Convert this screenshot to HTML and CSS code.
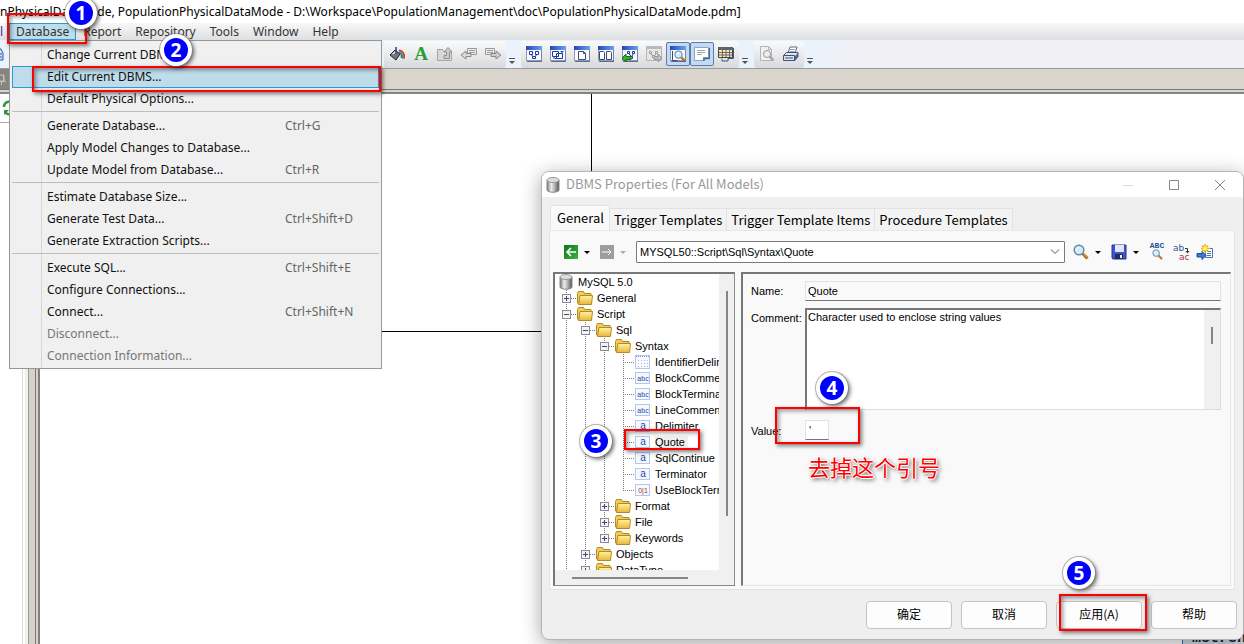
FILE: index.html
```
<!DOCTYPE html>
<html lang="zh-CN">
<head>
    <meta charset="UTF-8">
    <meta name="viewport" content="width=device-width, initial-scale=1.0">
    <title>DBMS Properties</title>
    <link rel="stylesheet" href="styles.css">
</head>
<body>
    <!-- shared icons -->
    <svg class="defs" width="0" height="0">
        <defs>
            <linearGradient id="metal"><stop offset="0" stop-color="#777"/><stop offset=".35" stop-color="#eee"/><stop offset=".6" stop-color="#bbb"/><stop offset="1" stop-color="#555"/></linearGradient>
            <linearGradient id="gold" x2="0" y2="1"><stop offset="0" stop-color="#fff3a8"/><stop offset="1" stop-color="#e8b637"/></linearGradient>
            <linearGradient id="blue" x2="1" y2="0"><stop offset="0" stop-color="#2348b8"/><stop offset="1" stop-color="#6fa0f0"/></linearGradient>
            <linearGradient id="green" x2="1" y2="1"><stop offset="0" stop-color="#0d7a12"/><stop offset="1" stop-color="#3cb043"/></linearGradient>
        </defs>
        <symbol id="cylinder" viewBox="0 0 14 16">
            <path d="M1 3v10c0 3 12 3 12 0V3z" fill="url(#metal)" stroke="#888"/>
            <ellipse cx="7" cy="3" rx="6" ry="2.5" fill="#ddd" stroke="#999"/>
        </symbol>
        <symbol id="folder" viewBox="0 0 16 14">
            <path d="M.5 12V2.500l1-2h5l1 2h6.500V12z" fill="#f2cb58" stroke="#b48a22"/>
            <path d="M1.500 13.500L3 4.500h12.500l-1 9z" fill="url(#gold)" stroke="#b48a22"/>
        </symbol>
        <symbol id="win" viewBox="0 0 16 16">
            <rect x=".5" y="1.500" width="15" height="13" fill="#f7f9fd" stroke="#8d9bb8"/>
            <rect y="0" width="16" height="4" fill="url(#blue)"/>
            <path d="M1 15.500h15V4" fill="none" stroke="#5d6c8c"/>
        </symbol>
        <symbol id="lens" viewBox="0 0 16 16">
            <path d="M9.500 9.500l5 5" stroke="#a8641a" stroke-width="3"/>
            <path d="M9.500 9l4.500 4.500" stroke="#f0b45c"/>
            <circle cx="6" cy="6" r="4.800" fill="#d4ebfa" stroke="#6485a5" stroke-width="1.400"/>
            <path d="M3.500 6A2.500 2.500 0 0 1 6 3.500" stroke="#fff" fill="none"/>
        </symbol>
        <symbol id="blob" viewBox="0 0 16 16">
            <path d="M.5 2.500h14v11H.5z" fill="#f4f8ff" stroke="#6f93d6" stroke-dasharray="1 1"/>
        </symbol>
        <symbol id="overflow" viewBox="0 0 8 8"><path d="M1 1.500h6" stroke="#555"/><path d="M1 4h6L4 7z" fill="#555"/></symbol>
    </svg>

    <div class="app">
        <header class="title-bar">nPhysicalDataMode, PopulationPhysicalDataMode - D:\Workspace\PopulationManagement\doc\PopulationPhysicalDataMode.pdm]</header>

        <nav class="menu-bar">
            <button class="clipped">l</button>
            <button class="open">Database</button>
            <button>Report</button>
            <button>Repository</button>
            <button>Tools</button>
            <button>Window</button>
            <button>Help</button>
        </nav>

        <div class="toolbar">
            <svg class="edge-icon" viewBox="0 0 4 14"><path d="M0 2h1l2 4v7H0" fill="#cfe0fa" stroke="#2f56a8"/><path d="M0 7h2M0 10h2" stroke="#2f56a8"/></svg>
            <div class="tool-group first">
                <button aria-label="Fill"><svg viewBox="0 0 16 16"><path d="M1 9l5-5 5 4-4 6z" fill="#777" stroke="#222"/><path d="M2.500 8.500L6 5l2 2z" fill="#eee"/><path d="M7 8V1" stroke="#223a9a" stroke-width="1.500"/><path d="M9 7c3-1 4 2 3.500 5" fill="none" stroke="#2456e0" stroke-width="1.500"/><path d="M9.500 6c4 0 4.500 3 4.500 7" fill="none" stroke="#20b040" stroke-width="1.500"/><path d="M10 4.500c5 0 5.500 4 5.500 8" fill="none" stroke="#f02020" stroke-width="1.500"/></svg></button>
                <button aria-label="Font"><svg viewBox="0 0 16 16"><text class="font-icon" x="8" y="14" text-anchor="middle">A</text></svg></button>
                <button aria-label="Up" disabled><svg viewBox="0 0 16 16"><path d="M.5 3.500h5l1 2h8v9H.5z" fill="#d8d8d8" stroke="#a5a5a5"/><path d="M7 12.500h5.500V6H15l-4-4.500L7 6h2.500v3.500H7z" fill="#ccc" stroke="#8f8f8f"/></svg></button>
                <button aria-label="Previous" disabled><svg viewBox="0 0 16 16"><path d="M6.500 2.500h9v6h-9zM8 4.500h6M8 6.500h6" fill="#eee" stroke="#999"/><path d="M0 9l5-4v2.500h5v3H5V13z" fill="#ddd" stroke="#888"/></svg></button>
                <button aria-label="Next" disabled><svg viewBox="0 0 16 16"><path d="M.5 2.500h9v6h-9zM2 4.500h6M2 6.500h6" fill="#eee" stroke="#999"/><path d="M16 9l-5-4v2.500H6v3h5V13z" fill="#ccc" stroke="#888"/></svg></button>
            </div>
            <svg class="overflow"><use href="#overflow"/></svg>
            <div class="tool-group">
                <button aria-label="Diagram"><svg viewBox="0 0 16 16"><use href="#win"/><path d="M3.500 5.500h3v3h-3zM9.500 5.500h3v3h-3zM6.500 10.500h3v2h-3zM5 8.500l2 2M11 8.500l-2 2" fill="#fff" stroke="#1c38a8"/></svg></button>
                <button aria-label="Package"><svg viewBox="0 0 16 16"><use href="#win"/><path d="M2.500 5.500h6v5h-6zM6.500 7.500h6v5h-6zM5 12.500h3M10.500 5.500h3M3 12h2M12 5v3" fill="none" stroke="#1c38a8"/></svg></button>
                <button aria-label="Page"><svg viewBox="0 0 16 16"><use href="#win"/><path d="M4.500 5.500h5l2 2v6h-7zM9.500 5.500v2h2" fill="#fff" stroke="#3a4a70"/></svg></button>
                <button aria-label="Pages"><svg viewBox="0 0 16 16"><use href="#win"/><path d="M1.500 5.500h4l1 1v7h-5zM8.500 5.500h4l1 1v7h-5z" fill="#fff" stroke="#3a4a70"/></svg></button>
                <button aria-label="Previous diagram"><svg viewBox="0 0 16 16"><use href="#win"/><path d="M5.500 5.500h2v2h-2zM10.500 5.500h2v2h-2zM8.500 10.500h2v2h-2zM7 8l2 2M11 8l-1 2" fill="#fff" stroke="#1c38a8"/><path d="M0 12l4-4v2.500h5v3H4V16z" fill="#35b52f" stroke="#167012"/></svg></button>
                <button aria-label="Next diagram" disabled><svg viewBox="0 0 16 16"><path d="M.5.5h15v14H.5z" fill="#e6e6e6" stroke="#b5b5b5"/><path d="M0 0h16v3H0z" fill="#b9b9b9"/><path d="M3.500 5.500h2v2h-2zM9.500 5.500h2v2h-2zM6.500 9.500h2v2h-2zM5 8l2 2M10 8l-2 2" fill="#fff" stroke="#999"/><path d="M16 12l-4-4v2.500H8v3h4V16z" fill="#bbb" stroke="#999"/></svg></button>
                <button class="pressed" aria-label="Browser"><svg viewBox="0 0 16 16"><use href="#win"/><path d="M2.500 5v9.500h5" fill="none" stroke="#3a4a70"/><use href="#lens" x="4" y="4" width="12" height="12"/></svg></button>
                <button class="pressed" aria-label="Output"><svg viewBox="0 0 16 16"><path d="M.5 1.500h14v10h-5v3h-9z" fill="#fff" stroke="#91a2bd"/><path d="M3 4.500h8M3 6.500h8M3 8.500h5" stroke="#9ba5b5"/><path d="M15.500 2v10.500H10V15" fill="none" stroke="#45679b" stroke-width="1.500"/></svg></button>
                <button aria-label="Result list"><svg viewBox="0 0 16 16"><path d="M.5 1.500h14v10h-14z" fill="#ffe9a8" stroke="#444"/><path d="M0 1h15v3H0z" fill="#596574"/><path d="M1 6.500h13M1 9h13M4.500 4v7M8 4v7M11.500 4v7" stroke="#667"/><path d="M15.500 2v10.500H10V15H4v-2.500" fill="none" stroke="#45577b"/></svg></button>
            </div>
            <svg class="overflow"><use href="#overflow"/></svg>
            <div class="tool-group">
                <button aria-label="Print preview" disabled><svg viewBox="0 0 16 16"><path d="M1.500.5h8l3 3v11h-11zM9.500.5v3h3" fill="#f0f0f0" stroke="#b5b5b5"/><circle cx="8" cy="8" r="3.500" fill="#eee" stroke="#999"/><path d="M10.500 10.500l4 4" stroke="#aaa" stroke-width="2.500"/></svg></button>
                <button aria-label="Print"><svg viewBox="0 0 16 16"><path d="M5 7l2-6h7l-2 6z" fill="#fff" stroke="#5c708f"/><path d="M7 3.500h5M6.500 5.500h5" stroke="#8fa2c0"/><path d="M.5 9.500l3-3h11.500v4l-3 4H.5z" fill="#dce5f2" stroke="#42536e"/><path d="M.5 9.500h11v5M2 12h8" fill="none" stroke="#42536e"/><path d="M12 10l3-3v4l-3 3z" fill="#526989"/></svg></button>
            </div>
            <svg class="overflow"><use href="#overflow"/></svg>
        </div>

        <div class="band">
            <div class="panel-head"><svg viewBox="0 0 9 14"><path d="M0 3h4v6H0M3.500 3v6M0 9.500h6M1.500 9v4" fill="none" stroke="#c9c4b0"/></svg></div>
        </div>

        <div class="workspace">
            <aside class="side">
                <div class="side-tools"><svg viewBox="0 0 16 16"><path d="M2 7c0-6 8-7 11-3M14 9c0 6-8 7-11 3" fill="none" stroke="#2a9a3a" stroke-width="2.500"/><path d="M14 1v5H9zM2 15v-5h5z" fill="#2a9a3a"/></svg></div>
            </aside>
            <div class="splitter"></div>
            <main class="canvas">
                <div class="page-cell"></div>
            </main>
        </div>
    </div>

    <div class="code-strip">motron</div>

    <!-- Database menu -->
    <div class="dropdown" role="menu">
        <button role="menuitem">Change Current DBMS...</button>
        <button role="menuitem" class="active">Edit Current DBMS...</button>
        <button role="menuitem">Default Physical Options...</button>
        <hr>
        <button role="menuitem">Generate Database...<span>Ctrl+G</span></button>
        <button role="menuitem">Apply Model Changes to Database...</button>
        <button role="menuitem">Update Model from Database...<span>Ctrl+R</span></button>
        <hr>
        <button role="menuitem">Estimate Database Size...</button>
        <button role="menuitem">Generate Test Data...<span>Ctrl+Shift+D</span></button>
        <button role="menuitem">Generate Extraction Scripts...</button>
        <hr>
        <button role="menuitem">Execute SQL...<span>Ctrl+Shift+E</span></button>
        <button role="menuitem">Configure Connections...</button>
        <button role="menuitem">Connect...<span>Ctrl+Shift+N</span></button>
        <button role="menuitem" disabled>Disconnect...</button>
        <button role="menuitem" disabled>Connection Information...</button>
    </div>

    <!-- Properties dialog -->
    <section class="dialog" role="dialog" aria-labelledby="dialogTitle">
        <div class="dialog-title">
            <svg class="cylinder"><use href="#cylinder"/></svg>
            <h1 id="dialogTitle">DBMS Properties (For All Models)</h1>
            <button aria-label="Minimize"><svg viewBox="0 0 10 10"><path d="M0 5.500h10" stroke="#ddd"/></svg></button>
            <button aria-label="Maximize"><svg viewBox="0 0 10 10"><path d="M.5.5h9v9h-9z" fill="none" stroke="#888"/></svg></button>
            <button aria-label="Close"><svg viewBox="0 0 10 10"><path d="M0 0l10 10M10 0L0 10" stroke="#888"/></svg></button>
        </div>

        <div class="tabs" role="tablist">
            <button role="tab" class="selected" aria-selected="true">General</button>
            <button role="tab">Trigger Templates</button>
            <button role="tab">Trigger Template Items</button>
            <button role="tab">Procedure Templates</button>
        </div>

        <div class="tab-page">
            <div class="path-bar">
                <button aria-label="Back"><svg class="nav-icon" viewBox="0 0 14 14"><path d="M0 0h14v14H0z" fill="url(#green)"/><path d="M12 7H3M7 3L3 7l4 4" fill="none" stroke="#fff" stroke-width="1.600"/></svg></button>
                <button class="caret" aria-label="Back history"></button>
                <button aria-label="Forward" disabled><svg class="nav-icon" viewBox="0 0 14 14"><path d="M0 0h14v14H0z" fill="#9d9d9d"/><path d="M2 7h9M8 4l3 3-3 3" fill="none" stroke="#fff"/></svg></button>
                <button class="caret" aria-label="Forward history" disabled></button>
                <div class="combo">
                    <select aria-label="Path"><option>MYSQL50::Script\Sql\Syntax\Quote</option></select>
                    <svg viewBox="0 0 10 6"><path d="M1 .5l4 4 4-4" fill="none" stroke="#555"/></svg>
                </div>
                <button aria-label="Find"><svg><use href="#lens"/></svg></button>
                <button class="caret" aria-label="Find options"></button>
                <button aria-label="Save"><svg viewBox="0 0 16 16"><path d="M1 1h14v14H2l-1-1z" fill="#3f55cc" stroke="#27358e"/><path d="M4 1h9v7H4z" fill="#dfe8fb"/><path d="M4 10h8v5H4z" fill="#222c60"/><path d="M9 11h2v3H9z" fill="#eee"/></svg></button>
                <button class="caret" aria-label="Save options"></button>
                <button class="wide" aria-label="Find text"><svg viewBox="0 0 16 16"><text class="abc" x="8" y="4" text-anchor="middle">ABC</text><use href="#lens" x="3" y="5" width="11" height="11"/></svg></button>
                <button class="wide" aria-label="Replace text"><svg viewBox="0 0 16 16"><text class="ab" x="0" y="7">ab</text><text class="ac" x="6" y="16">ac</text><path d="M12 4.500h2.500V8" fill="none" stroke="#334"/><path d="M12.500 7h4l-2 2.500z" fill="#334"/></svg></button>
                <button class="wide" aria-label="Import"><svg viewBox="0 0 16 16"><path d="M8.500 4.500h7v9h-7zM10 7.500h4M10 9.500h4M10 11.500h4" fill="#fff" stroke="#4472bd"/><path d="M8 0v9M4 4.500h9M5 1.500l6 6M11 1.500l-6 6" stroke="#e6b800" stroke-width="1.500"/><circle cx="8" cy="4.500" r="2" fill="#fff27a"/><path d="M0 9.500h5V7.500l4 4-4 4v-2.500H0z" fill="#3a78d8" stroke="#1d4c9c"/></svg></button>
            </div>

            <div class="split">
                <div class="tree">
                    <div class="tree-body">
                        <ul class="nodes">
                            <li class="root"><svg class="cylinder"><use href="#cylinder"/></svg>MySQL 5.0</li>
                            <li><button class="exp plus" aria-label="Expand"></button><svg><use href="#folder"/></svg>General</li>
                            <li><button class="exp" aria-label="Collapse"></button><svg><use href="#folder"/></svg>Script</li>
                            <li><i></i><button class="exp" aria-label="Collapse"></button><svg><use href="#folder"/></svg>Sql</li>
                            <li><i></i><i></i><button class="exp" aria-label="Collapse"></button><svg><use href="#folder"/></svg>Syntax</li>
                            <li><i></i><i></i><i></i><i class="leaf"></i><svg viewBox="0 0 16 16"><path d="M.5 1.500h14v13H.5z" fill="#f8faff" stroke="#6f93d6" stroke-dasharray="1 1"/><path d="M1 2.500h14" stroke="#6f93d6" stroke-dasharray="1 1"/><path d="M3 6.500h10M3 9.500h10M3 12.500h10" stroke="#a9b9dc" stroke-dasharray="1 2"/></svg>IdentifierDelimiter</li>
                            <li><i></i><i></i><i></i><i class="leaf"></i><svg viewBox="0 0 16 16"><use href="#blob"/><text class="glyph" x="8" y="11" text-anchor="middle">abc</text></svg>BlockComment</li>
                            <li><i></i><i></i><i></i><i class="leaf"></i><svg viewBox="0 0 16 16"><use href="#blob"/><text class="glyph" x="8" y="11" text-anchor="middle">abc</text></svg>BlockTerminator</li>
                            <li><i></i><i></i><i></i><i class="leaf"></i><svg viewBox="0 0 16 16"><use href="#blob"/><text class="glyph" x="8" y="11" text-anchor="middle">abc</text></svg>LineComment</li>
                            <li><i></i><i></i><i></i><i class="leaf"></i><svg viewBox="0 0 16 16"><use href="#blob"/><text class="glyph big" x="8" y="11" text-anchor="middle">a</text></svg>Delimiter</li>
                            <li><i></i><i></i><i></i><i class="leaf"></i><svg viewBox="0 0 16 16"><use href="#blob"/><text class="glyph big" x="8" y="11" text-anchor="middle">a</text></svg><span class="current">Quote</span></li>
                            <li><i></i><i></i><i></i><i class="leaf"></i><svg viewBox="0 0 16 16"><use href="#blob"/><text class="glyph big" x="8" y="11" text-anchor="middle">a</text></svg>SqlContinue</li>
                            <li><i></i><i></i><i></i><i class="leaf"></i><svg viewBox="0 0 16 16"><use href="#blob"/><text class="glyph big" x="8" y="11" text-anchor="middle">a</text></svg>Terminator</li>
                            <li><i></i><i></i><i></i><i class="leaf last"></i><svg viewBox="0 0 16 16"><use href="#blob"/><text class="glyph bool" x="8" y="11" text-anchor="middle">0|1</text></svg>UseBlockTerminator</li>
                            <li><i></i><i></i><button class="exp plus" aria-label="Expand"></button><svg><use href="#folder"/></svg>Format</li>
                            <li><i></i><i></i><button class="exp plus" aria-label="Expand"></button><svg><use href="#folder"/></svg>File</li>
                            <li><i></i><i></i><button class="exp plus end" aria-label="Expand"></button><svg><use href="#folder"/></svg>Keywords</li>
                            <li><i></i><button class="exp plus" aria-label="Expand"></button><svg><use href="#folder"/></svg>Objects</li>
                            <li><i></i><button class="exp plus" aria-label="Expand"></button><svg><use href="#folder"/></svg>DataType</li>
                        </ul>
                        <div class="v-scroll"></div>
                    </div>
                    <div class="h-scroll"></div>
                </div>

                <form class="fields">
                    <label for="name">Name:</label>
                    <input id="name" type="text" value="Quote" readonly>
                    <label for="comment">Comment:</label>
                    <div class="comment-box">
                        <textarea id="comment">Character used to enclose string values</textarea>
                        <div class="c-scroll"></div>
                    </div>
                    <label for="value">Value:</label>
                    <input id="value" class="tiny" type="text" value="'">
                </form>
            </div>
        </div>

        <div class="actions">
            <button>确定</button>
            <button>取消</button>
            <button>应用(A)</button>
            <button>帮助</button>
        </div>
    </section>

    <!-- step marks laid over the windows -->
    <div class="mark mark-1"></div>
    <div class="mark mark-2"></div>
    <div class="mark mark-3"></div>
    <div class="mark mark-4"></div>
    <div class="mark mark-5"></div>
    <div class="step step-1">1</div>
    <div class="step step-2">2</div>
    <div class="step step-3">3</div>
    <div class="step step-4">4</div>
    <div class="step step-5">5</div>
    <p class="note">去掉这个引号</p>
</body>
</html>
```
FILE: styles.css
```
* {
    box-sizing: border-box;
}
body {
    margin: 0;
    height: 100vh;
    overflow: hidden;
    position: relative;
    background: #fff;
    color: #111;
    font-family: "Noto Sans CJK SC", sans-serif;
    font-size: 13px;
}
button {
    font: inherit;
    color: inherit;
    background: none;
    border: 0;
    padding: 0;
    white-space: nowrap;
}
svg {
    display: block;
    flex: none;
    width: 16px;
    height: 16px;
}
.defs {
    position: absolute;
    width: 0;
    height: 0;
}

/* main window */
.app {
    display: flex;
    flex-direction: column;
    height: 100%;
}
.title-bar,
.menu-bar,
.dropdown {
    font-family: "Noto Sans", sans-serif;
    font-size: 12px;
}
.title-bar {
    height: 23px;
    line-height: 24px;
    color: #000;
    white-space: nowrap;
}
.menu-bar {
    display: flex;
    height: 17px;
    background: linear-gradient(#f8f8f8, #dcdee0);
}
.menu-bar button {
    padding: 0 7px;
    line-height: 17px;
    color: #333;
}
.menu-bar .clipped {
    width: 9px;
    padding: 0;
    text-align: left;
    color: #30309a;
}
.menu-bar .open {
    padding: 0 6px;
    line-height: 15px;
    border: 1px solid #2a9bd6;
    background: #bfdceb;
}
.toolbar {
    display: flex;
    align-items: center;
    height: 29px;
    background: linear-gradient(90deg, #eaf2fc 815px, #f0f0f4 860px);
    border-bottom: 1px solid #959ba3;
}
.edge-icon {
    width: 4px;
    height: 14px;
}
.tool-group {
    display: flex;
    align-items: center;
    height: 27px;
    padding: 0 1px;
    border-radius: 3px;
    background: linear-gradient(#fafafa, #d8d9dc);
}
.tool-group.first {
    margin-left: 380px;
}
.tool-group button {
    display: flex;
    align-items: center;
    justify-content: center;
    width: 24px;
    height: 24px;
}
.tool-group .pressed {
    border: 1px solid #5a7ca8;
    border-radius: 2px;
    background: #c4daf4;
}
.font-icon {
    font: bold 19px "Liberation Serif", serif;
    fill: #22a030;
}
.overflow {
    width: 8px;
    height: 8px;
    margin: 14px 5px 0 2px;
}
.band {
    flex: none;
    height: 25px;
    background: linear-gradient(#d9d5cd 20px, #7b7974 20px, #7b7974 21px, #d9d5cd 21px, #d9d5cd 23px, #858585 23px);
}
.panel-head {
    width: 9px;
    height: 20px;
    padding-top: 3px;
    background: #858585;
}
.panel-head svg {
    width: 9px;
    height: 14px;
}
.workspace {
    flex: 1;
    display: flex;
    min-height: 0;
}
.side {
    width: 22px;
}
.side-tools {
    height: 29px;
    padding: 6px 2px;
    overflow: hidden;
    border-bottom: 1px solid #aaa;
}
.splitter {
    width: 18px;
    background: linear-gradient(90deg, #ddd 1px, #fff 1px, #fff 3px, #e4e4e4 3px, #f2f2f2 4px, #f2f2f2 6px, #9b9b9b 6px, #9b9b9b 7px, #d6d2c9 7px, #d6d2c9 13px, #7b7974 13px, #7b7974 14px, #d6d2c9 14px, #d6d2c9 16px, #808080 16px);
}
.canvas {
    flex: 1;
    background: #fff;
}
.page-cell {
    width: 552px;
    height: 238px;
    border-right: 1px solid #000;
    border-bottom: 1px solid #000;
}
.code-strip {
    position: absolute;
    right: 0;
    bottom: 0;
    width: 62px;
    height: 14px;
    padding-left: 9px;
    border-left: 1px solid #2f78b8;
    background: #cfd9e8;
    color: #222;
    font: bold 15px/17px "Liberation Mono", monospace;
}

/* drop-down menu */
.dropdown {
    position: absolute;
    left: 9px;
    top: 40px;
    width: 373px;
    padding: 3px 2px 1px;
    border: 1px solid #979797;
    background: linear-gradient(90deg, transparent 31px, #d7d7d7 31px, #d7d7d7 32px, transparent 32px) #f0f0f0;
}
.dropdown button {
    display: flex;
    width: 100%;
    height: 22px;
    padding-left: 35px;
    line-height: 22px;
    text-align: left;
    position: relative;
}
.dropdown .active {
    padding-left: 34px;
    line-height: 20px;
    border: 1px solid #2a9bd6;
    background: #bfdceb;
}
.dropdown button:disabled {
    color: #777;
}
.dropdown span {
    position: absolute;
    left: 273px;
    color: #666;
}
.dropdown hr {
    height: 5px;
    margin: 0;
    border: 0;
    background: linear-gradient(transparent 1px, #bdbdbd 1px, #bdbdbd 2px, transparent 2px);
}

/* dialog */
.dialog {
    position: absolute;
    left: 541px;
    right: 0;
    top: 171px;
    bottom: 4px;
    display: flex;
    flex-direction: column;
    overflow: hidden;
    border: 1px solid #b5b5b5;
    border-radius: 8px;
    background: #efefef;
    box-shadow: 0 4px 20px rgba(0, 0, 0, 0.35);
}
.dialog-title {
    display: flex;
    align-items: center;
    height: 25px;
    padding: 0 0 0 4px;
    background: #fff;
}
.dialog-title h1 {
    flex: 1;
    margin: 0 0 0 6px;
    font-size: 13px;
    font-weight: 400;
    line-height: 20px;
    padding-bottom: 2px;
    color: #999;
}
.dialog-title button {
    display: flex;
    justify-content: center;
    width: 46px;
}
.dialog-title button svg {
    width: 10px;
    height: 10px;
}
.cylinder {
    width: 14px;
    height: 16px;
}
.tabs {
    display: flex;
    align-items: flex-end;
    height: 33px;
    padding: 0 8px;
    color: #000;
}
.tabs button {
    height: 22px;
    padding: 0 4px;
    line-height: 20px;
    border: 1px solid #e2e2e2;
    border-width: 1px 1px 0 0;
    background: #f3f3f3;
}
.tabs .selected {
    height: 25px;
    padding: 0 5px 0 6px;
    border-width: 1px 1px 0;
    background: #f9f9f9;
}
.tab-page {
    flex: 1;
    display: flex;
    flex-direction: column;
    min-height: 0;
    margin: 0 8px 0 7px;
    padding: 10px 3px 3px;
    border: 1px solid #e2e2e2;
    border-top-color: #e8e8e8;
    background: #f9f9f9;
    font-family: "Liberation Sans", sans-serif;
    font-size: 11px;
    color: #000;
}
.path-bar {
    display: flex;
    align-items: center;
    height: 22px;
    margin-bottom: 9px;
    padding: 0 18px 0 11px;
}
.path-bar .nav-icon {
    width: 14px;
    height: 14px;
}
.caret {
    width: 0;
    height: 0;
    margin: 0 10px 0 6px;
    border: 3px solid transparent;
    border-top-color: #000;
    border-bottom: 0;
}
.caret:disabled {
    border-top-color: #aaa;
}
.combo {
    flex: 1;
    display: flex;
    align-items: center;
    height: 22px;
    margin-right: 8px;
    padding-right: 4px;
    border: 1px solid #7a7a7a;
    border-radius: 1px;
    background: #fff;
}
.combo select {
    flex: 1;
    appearance: none;
    padding: 0 3px;
    border: 0;
    background: none;
    color: #000;
    font: inherit;
}
.combo svg {
    width: 10px;
    height: 6px;
}
.path-bar .wide + .wide {
    margin-left: 8px;
}
.path-bar svg {
    overflow: visible;
}
.abc {
    font: bold 8px "Liberation Mono", monospace;
    fill: #284f9c;
}
.ab, .ac {
    font: 9px "DejaVu Sans", sans-serif;
    fill: #33558d;
}
.ac {
    fill: #b0303c;
}
.split {
    flex: 1;
    display: flex;
    gap: 6px;
    min-height: 0;
}
.tree {
    display: flex;
    flex-direction: column;
    width: 182px;
    border: 2px solid #777;
    border-right: 1px solid #8a8a8a;
    border-bottom: 1px solid #8a8a8a;
    background: #fff;
}
.tree-body {
    flex: 1;
    display: flex;
    min-height: 0;
}
.nodes {
    flex: 1;
    min-width: 0;
    margin: 0;
    padding: 0 0 0 2px;
    overflow: hidden;
    list-style: none;
}
.nodes li {
    display: flex;
    align-items: center;
    height: 16px;
    white-space: nowrap;
}
.nodes svg {
    margin: 0 4px 0 1px;
}
.nodes .root svg {
    margin: 0 5px 0 2px;
}
.nodes i, .exp {
    flex: none;
    width: 19px;
    height: 16px;
    background: repeating-linear-gradient(#777 0 1px, transparent 1px 2px) 9px 0 / 1px 100% no-repeat;
}
.nodes .leaf {
    width: 20px;
    background:
        repeating-linear-gradient(#777 0 1px, transparent 1px 2px) 9px 0 / 1px 100% no-repeat,
        repeating-linear-gradient(90deg, #777 0 1px, transparent 1px 2px) 9px 8px / 11px 1px no-repeat;
}
.nodes .leaf.last {
    background-size: 1px 8px, 11px 1px;
}
.exp {
    background:
        linear-gradient(#2f4a8c, #2f4a8c) 7px 8px / 5px 1px no-repeat,
        linear-gradient(#f4f4f4, #f4f4f4) 6px 5px / 7px 7px no-repeat,
        linear-gradient(#8c8c8c, #8c8c8c) 5px 4px / 9px 9px no-repeat,
        repeating-linear-gradient(#777 0 1px, transparent 1px 2px) 9px 0 / 1px 100% no-repeat,
        repeating-linear-gradient(90deg, #777 0 1px, transparent 1px 2px) 14px 8px / 5px 1px no-repeat;
}
.exp.plus {
    background:
        linear-gradient(#2f4a8c, #2f4a8c) 7px 8px / 5px 1px no-repeat,
        linear-gradient(#2f4a8c, #2f4a8c) 9px 6px / 1px 5px no-repeat,
        linear-gradient(#f4f4f4, #f4f4f4) 6px 5px / 7px 7px no-repeat,
        linear-gradient(#8c8c8c, #8c8c8c) 5px 4px / 9px 9px no-repeat,
        repeating-linear-gradient(#777 0 1px, transparent 1px 2px) 9px 0 / 1px 100% no-repeat,
        repeating-linear-gradient(90deg, #777 0 1px, transparent 1px 2px) 14px 8px / 5px 1px no-repeat;
}
.exp.end {
    background-size: 5px 1px, 1px 5px, 7px 7px, 9px 9px, 1px 8px, 5px 1px;
}
.current {
    padding-right: 3px;
    background: #f0f0f0;
}
.glyph {
    font: 7px "Liberation Sans", sans-serif;
    fill: #3344a8;
}
.glyph.big {
    font-size: 10px;
}
.glyph.bool {
    fill: #a83333;
}
.v-scroll {
    width: 15px;
    background: linear-gradient(#858585, #858585) 7px 17px / 2px 225px no-repeat #f0f0f0;
}
.h-scroll {
    height: 15px;
    background: linear-gradient(#858585, #858585) 17px 7px / 116px 2px no-repeat #f0f0f0;
}
.fields {
    flex: 1;
    display: grid;
    grid-template-columns: 54px 1fr;
    align-content: start;
    row-gap: 7px;
    padding: 7px 9px 0 8px;
    border: 2px solid #777;
    border-right: 1px solid #e6e6e6;
    border-bottom: 1px solid #e6e6e6;
}
.fields label {
    line-height: 20px;
}
.fields input,
.fields textarea {
    width: 100%;
    margin: 0;
    padding: 0 2px;
    border: 1px solid #e2e2e2;
    border-bottom-color: #777;
    border-radius: 0;
    color: #000;
    font: inherit;
}
.fields input {
    height: 20px;
    background: #f9f9f9;
}
.fields .tiny {
    width: 24px;
    margin-top: 3px;
    padding: 0 3px;
    background: #fff;
}
.fields label:last-of-type {
    padding-top: 4px;
}
.comment-box {
    display: flex;
    height: 102px;
    border: 2px solid #777;
    border-right: 1px solid #ddd;
    border-bottom: 1px solid #ddd;
    background: #fff;
}
.fields textarea {
    flex: 1;
    padding: 1px;
    border: 0;
    resize: none;
    overflow: hidden;
}
.c-scroll {
    width: 16px;
    background: linear-gradient(#858585, #858585) 7px 17px / 2px 17px no-repeat #f0f0f0;
}
.actions {
    display: flex;
    justify-content: flex-end;
    gap: 9px;
    padding: 11px 6px 10px;
    font-size: 12px;
    line-height: 24px;
    color: #000;
}
.actions button {
    width: 86px;
    height: 28px;
    padding-bottom: 2px;
    border: 1px solid #c4c4c4;
    border-radius: 4px;
    background: #fdfdfd;
}

/* step marks */
.mark {
    position: absolute;
    border: 2px solid #f00;
    box-shadow: 2px 2px 4px rgba(0, 0, 0, 0.5), inset 2px 2px 4px rgba(0, 0, 0, 0.4);
}
.mark-1 { left: 7px; top: 13px; width: 80px; height: 31px; }
.mark-2 { left: 32px; top: 66px; width: 349px; height: 26px; }
.mark-3 { left: 624px; top: 429px; width: 76px; height: 21px; }
.mark-4 { left: 775px; top: 407px; width: 85px; height: 37px; }
.mark-5 { left: 1059px; top: 594px; width: 88px; height: 37px; }
.step {
    position: absolute;
    width: 32px;
    height: 32px;
    border: 4px solid #fff;
    border-radius: 50%;
    background: #00f;
    color: #fff;
    font: bold 19px/24px "Noto Sans", sans-serif;
    text-align: center;
    box-shadow: 0 0 0 1px rgba(120, 120, 120, 0.5), 2px 2px 4px rgba(0, 0, 0, 0.6);
}
.step-1 { left: 65px; top: -3px; }
.step-2 { left: 160px; top: 34px; }
.step-3 { left: 580px; top: 425px; }
.step-4 { left: 816px; top: 372px; }
.step-5 { left: 1063px; top: 557px; }
.note {
    position: absolute;
    left: 808px;
    top: 450px;
    margin: 0;
    color: #f00;
    font-size: 22px;
    line-height: 32px;
    text-shadow: 1px 0 #fff, -1px 0 #fff, 0 1px #fff, 0 -1px #fff, 2px 2px 4px #333;
}
```
